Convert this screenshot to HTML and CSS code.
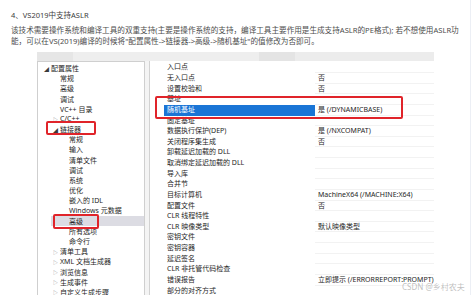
FILE: index.html
```html
<!DOCTYPE html>
<html lang="zh-CN">
<head>
    <meta charset="UTF-8">
    <meta name="viewport" content="width=device-width, initial-scale=1.0">
    <title>VS2019中支持ASLR</title>
    <link rel="stylesheet" href="styles.css">
</head>
<body>

    <div class="page">
        <!-- Artículo -->
        <div class="article">
            <p class="title">4、VS2019中支持ASLR</p>
            <p class="para">该技术需要操作系统和编译工具的双重支持(主要是操作系统的支持，编译工具主要作用是生成支持ASLR的PE格式); 若不想使用ASLR功<br>能，可以在VS(2019)编译的时候将"配置属性-&gt;链接器-&gt;高级-&gt;随机基址"的值修改为否即可。</p>

            <!-- Captura del diálogo -->
            <div class="shot">
                <div class="shot-top"></div>
                <div class="shot-body">

                    <div class="tree">
                        <div class="tree-row lv0"><span class="arrow open">◢</span>配置属性</div>
                        <div class="tree-row lv1">常规</div>
                        <div class="tree-row lv1">高级</div>
                        <div class="tree-row lv1">调试</div>
                        <div class="tree-row lv1">VC++ 目录</div>
                        <div class="tree-row lv1 has-arrow"><span class="arrow">▷</span>C/C++</div>
                        <div class="tree-row lv1 has-arrow"><span class="arrow open">◢</span>链接器</div>
                        <div class="tree-row lv2">常规</div>
                        <div class="tree-row lv2">输入</div>
                        <div class="tree-row lv2">清单文件</div>
                        <div class="tree-row lv2">调试</div>
                        <div class="tree-row lv2">系统</div>
                        <div class="tree-row lv2">优化</div>
                        <div class="tree-row lv2">嵌入的 IDL</div>
                        <div class="tree-row lv2">Windows 元数据</div>
                        <div class="tree-row lv2 sel">高级</div>
                        <div class="tree-row lv2">所有选项</div>
                        <div class="tree-row lv2">命令行</div>
                        <div class="tree-row lv1 has-arrow"><span class="arrow">▷</span>清单工具</div>
                        <div class="tree-row lv1 has-arrow"><span class="arrow">▷</span>XML 文档生成器</div>
                        <div class="tree-row lv1 has-arrow"><span class="arrow">▷</span>浏览信息</div>
                        <div class="tree-row lv1 has-arrow"><span class="arrow">▷</span>生成事件</div>
                        <div class="tree-row lv1 has-arrow"><span class="arrow">▷</span>自定义生成步骤</div>
                    </div>

                    <div class="grid">
                        <div class="grid-row"><div class="name">入口点</div><div class="value"></div></div>
                        <div class="grid-row"><div class="name">无入口点</div><div class="value">否</div></div>
                        <div class="grid-row"><div class="name">设置校验和</div><div class="value">否</div></div>
                        <div class="grid-row"><div class="name">基址</div><div class="value"></div></div>
                        <div class="grid-row active"><div class="name">随机基址</div><div class="value">是 (/DYNAMICBASE)</div></div>
                        <div class="grid-row"><div class="name">固定基址</div><div class="value"></div></div>
                        <div class="grid-row"><div class="name">数据执行保护(DEP)</div><div class="value">是 (/NXCOMPAT)</div></div>
                        <div class="grid-row"><div class="name">关闭程序集生成</div><div class="value">否</div></div>
                        <div class="grid-row"><div class="name">卸载延迟加载的 DLL</div><div class="value"></div></div>
                        <div class="grid-row"><div class="name">取消绑定延迟加载的 DLL</div><div class="value"></div></div>
                        <div class="grid-row"><div class="name">导入库</div><div class="value"></div></div>
                        <div class="grid-row"><div class="name">合并节</div><div class="value"></div></div>
                        <div class="grid-row"><div class="name">目标计算机</div><div class="value">MachineX64 (/MACHINE:X64)</div></div>
                        <div class="grid-row"><div class="name">配置文件</div><div class="value">否</div></div>
                        <div class="grid-row"><div class="name">CLR 线程特性</div><div class="value"></div></div>
                        <div class="grid-row"><div class="name">CLR 映像类型</div><div class="value">默认映像类型</div></div>
                        <div class="grid-row"><div class="name">密钥文件</div><div class="value"></div></div>
                        <div class="grid-row"><div class="name">密钥容器</div><div class="value"></div></div>
                        <div class="grid-row"><div class="name">延迟签名</div><div class="value"></div></div>
                        <div class="grid-row"><div class="name">CLR 非托管代码检查</div><div class="value"></div></div>
                        <div class="grid-row"><div class="name">错误报告</div><div class="value">立即提示 (/ERRORREPORT:PROMPT)</div></div>
                        <div class="grid-row"><div class="name">部分的对齐方式</div><div class="value"></div></div>
                    </div>

                </div>

                <!-- Marcas rojas -->
                <div class="mark mark-linker"></div>
                <div class="mark mark-advanced"></div>
                <div class="mark mark-random"></div>
            </div>
        </div>
    </div>

    <div class="watermark">CSDN @乡村农夫</div>

</body>
</html>
```

FILE: styles.css
```css
/* Estilos globales */
* {
    margin: 0;
    padding: 0;
    box-sizing: border-box;
}

body, html {
    height: 100%;
    background: #fff;
    font-family: "Noto Sans", "Noto Sans CJK SC", sans-serif;
    overflow: hidden;
}

.page {
    display: flex;
    height: 295px;
}

/* Artículo */
.article {
    width: 471px;
    height: 295px;
    padding-left: 11px;
    border-right: 1px solid #eceff5;
    overflow: hidden;
}

.title {
    margin-top: 10px;
    font-size: 7.5px;
    line-height: 10px;
    color: #3d3d3d;
}

.para {
    margin-top: 5px;
    font-size: 7.6px;
    line-height: 11px;
    color: #4d4d4d;
    white-space: nowrap;
}

/* Captura */
.shot {
    position: relative;
    width: 397px;
    margin-top: 5px;
    margin-left: 26px;
    background: #f4f4f4;
}

.shot-top {
    height: 9px;
    background: linear-gradient(to right, #e6e6e6 0, #e6e6e6 9%, #eeeeee 9%, #eeeeee 56%, #e4e4e4 56%, #e4e4e4 65%, #ececec 65%);
}

.shot-body {
    display: flex;
    gap: 4px;
    height: 240px;
    font-size: 7px;
    color: #262626;
}

/* Árbol */
.tree {
    width: 108px;
    padding-top: 1px;
    background: #fff;
    border: 1px solid #cfcfcf;
    border-bottom: none;
}

.tree-row {
    display: flex;
    align-items: center;
    height: 10.18px;
    white-space: nowrap;
}

.tree-row.lv0 { padding-left: 6px; }
.tree-row.lv1 { padding-left: 22px; }
.tree-row.lv1.has-arrow { padding-left: 15px; }
.tree-row.lv2 { padding-left: 31px; }

.tree-row.sel {
    margin-left: 13px;
    padding-left: 18px;
    background: #dcdce3;
}

.arrow {
    width: 7px;
    font-size: 5px;
    color: #8a8a8a;
}

.arrow.open {
    color: #3a3a3a;
    font-size: 5px;
}

/* Cuadrícula de propiedades */
.grid {
    flex: 1;
    padding-top: 1.4px;
    background: #fff;
    border-left: 1px solid #d2d2d2;
}

.grid-row {
    display: flex;
    height: 10.63px;
}

.grid-row .name {
    width: 151px;
    margin-left: 14px;
    padding-left: 3px;
    line-height: 10.63px;
    white-space: nowrap;
}

.grid-row .value {
    flex: 1;
    padding-left: 3px;
    line-height: 10.63px;
    white-space: nowrap;
    overflow: hidden;
    border-bottom: 1px solid #f2f2f2;
}

.grid-row.active .name {
    background: #1a75d6;
    color: #fff;
}

/* Marcas rojas */
.mark {
    position: absolute;
    border: 2px solid #e0242a;
    border-radius: 2px;
}

.mark-linker {
    left: 9px;
    top: 69px;
    width: 50px;
    height: 14px;
}

.mark-advanced {
    left: 16px;
    top: 162px;
    width: 46px;
    height: 15px;
}

.mark-random {
    left: 118px;
    top: 44px;
    width: 248px;
    height: 23px;
}

/* Marca de agua */
.watermark {
    position: absolute;
    left: 402px;
    top: 281px;
    font-size: 8px;
    line-height: 11px;
    color: rgba(150, 150, 150, 0.6);
    white-space: nowrap;
}
```
